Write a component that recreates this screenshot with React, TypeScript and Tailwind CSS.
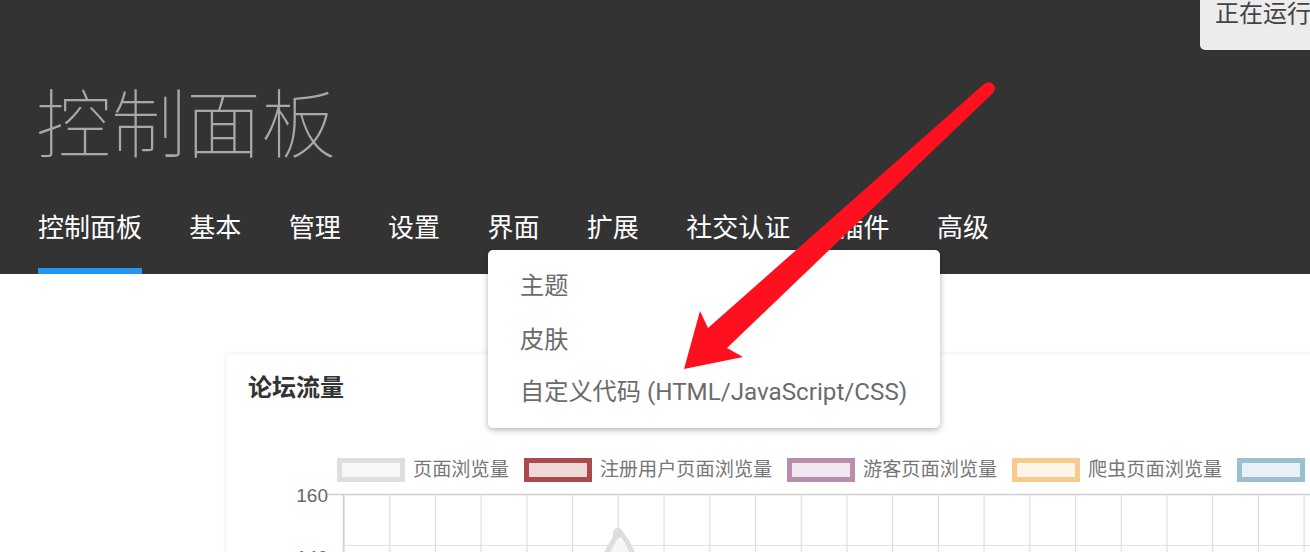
const tabs = ["控制面板", "基本", "管理", "设置", "界面", "扩展", "社交认证", "插件", "高级"];

const legend = [
  { label: "页面浏览量", swatch: "border-[#dedede] bg-[#f7f7f7]" },
  { label: "注册用户页面浏览量", swatch: "border-[#ab4a4a] bg-[#efd8d8]" },
  { label: "游客页面浏览量", swatch: "border-[#ba8cae] bg-[#f1e8f0]" },
  { label: "爬虫页面浏览量", swatch: "border-[#f8cb8c] bg-[#fcf5e8]" },
  { label: "", swatch: "border-[#9cbfd0] bg-[#e9f1f5]" },
];

function Chart() {
  const xs = Array.from({ length: 22 }, (_, i) => 48 + i * 45.72);
  return (
    <svg width="1014" height="80" viewBox="0 0 1014 80" className="block shrink-0 -ml-[3px] overflow-visible">
      {xs.map((x) => (
        <line key={x} x1={x} y1="2" x2={x} y2="80" stroke="#e0e0e0" strokeWidth="1.200" />
      ))}
      <line x1="47.500" y1="2" x2="47.500" y2="80" stroke="#cfcfcf" strokeWidth="1.500" />
      <line x1="32" y1="2.500" x2="1014" y2="2.500" stroke="#cfcfcf" strokeWidth="1.300" />
      <line x1="47" y1="53.500" x2="1014" y2="53.500" stroke="#e2e2e2" strokeWidth="1.200" />
      <text x="32" y="9.500" textAnchor="end" fontSize="19" fill="#666" fontFamily="'Liberation Sans', sans-serif">160</text>
      <text x="32" y="71.500" textAnchor="end" fontSize="19" fill="#666" fontFamily="'Liberation Sans', sans-serif">140</text>
      <path d="M312 62 L320 45 Q328 50 335 62 Z" fill="#f6f6f6" />
      <path d="M310 62 L320 44" fill="none" stroke="#dedede" strokeWidth="5" />
      <path d="M325 41 Q332 50 337 62" fill="none" stroke="#dedede" strokeWidth="5" />
      <circle cx="322" cy="41" r="5" fill="#dcdcdc" />
    </svg>
  );
}

export default function App() {
  return (
    <div className="relative w-[1310px] h-[552px] overflow-hidden bg-white font-['Roboto','Noto_Sans_CJK_SC',sans-serif]">
      <header className="h-[274px] bg-[#333333] flex flex-col pl-[38px]">
        <h1 className="-ml-[2px] mt-[73px] h-[106px] text-[75px] leading-[106px] font-thin text-[#a8a8a8]">控制面板</h1>
        <nav className="mt-[13px] flex gap-[47.35px] text-[26px] text-white">
          {tabs.map((t, i) => (
            <div key={t} className={`h-[82px] pt-[17px] leading-[38px] border-b-[6px] ${i === 0 ? "border-[#2196f3]" : "border-transparent"}`}>
              {t}
            </div>
          ))}
        </nav>
      </header>

      <main className="pl-[226px] pt-[80px]">
        <section className="w-[1200px] h-[300px] rounded-tl-[4px] bg-white shadow-[0_0_4px_rgba(0,0,0,0.1)] pl-[22px] pt-[17px]">
          <h2 className="text-[24px] leading-[34px] font-bold text-[#333]">论坛流量</h2>
          <div className="mt-[53px] ml-[89px] flex items-center h-[24px] text-[19.2px] text-[#777] whitespace-nowrap">
            {legend.map((l, i) => (
              <div key={i} className="flex items-center gap-[8px] mr-[14.7px] shrink-0">
                <span className={`block w-[68px] h-[24px] border-[5px] ${l.swatch}`} />
                {l.label && <span>{l.label}</span>}
              </div>
            ))}
          </div>
          <div className="mt-[10px] ml-[51px]">
            <Chart />
          </div>
        </section>
      </main>

      <div className="absolute left-[488px] top-[250px] w-[452px] h-[178px] rounded-[5px] bg-white shadow-[0_2px_6px_rgba(0,0,0,0.3)] pl-[32px] pt-[10px] text-[24.2px] leading-[53px] text-[#6b6b6b]">
        <div>主题</div>
        <div className="mt-px -mb-px">皮肤</div>
        <div className="whitespace-nowrap">自定义代码 (HTML/JavaScript/CSS)</div>
      </div>

      <div className="absolute left-[1200px] top-0 w-[110px] h-[50px] rounded-bl-[5px] bg-[#ececec] pl-[15px] text-[24px] leading-[28px] text-[#444] whitespace-nowrap overflow-hidden">
        正在运行
      </div>

      <svg className="absolute left-0 top-0 pointer-events-none" width="1310" height="552" viewBox="0 0 1310 552">
        <path d="M684 369 L700 311 L708 328 L984 84 Q990 80 994 85 Q996.500 89 993 93 L727 348 L743 357 Z" fill="#ff101f" />
      </svg>
    </div>
  );
}
